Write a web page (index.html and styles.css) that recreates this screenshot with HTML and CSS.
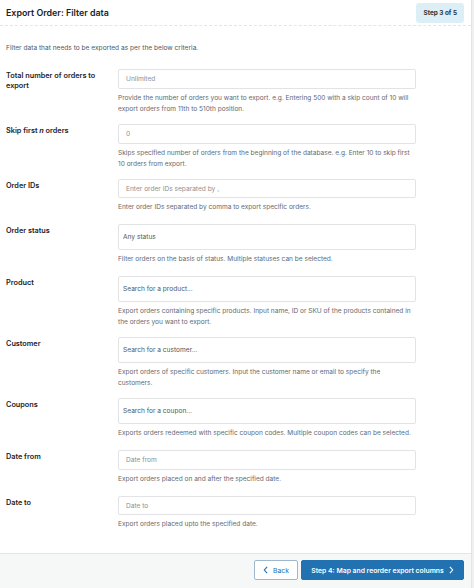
FILE: index.html
```html
<!DOCTYPE html>
<html>
<head>
<meta charset="utf-8">
<link rel="stylesheet" href="styles.css">
</head>
<body>
<div class="panel">
  <div class="header">
    <h1 class="title">Export Order: Filter data</h1>
    <span class="badge">Step 3 of 5</span>
  </div>
  <p class="intro">Filter data that needs to be exported as per the below criteria.</p>
  <div class="form">
    <div class="row">
      <div class="label">Total number of orders to export</div>
      <div class="field">
        <div class="input h20"><span class="ph">Unlimited</span></div>
        <div class="help">Provide the number of orders you want to export. e.g. Entering 500 with a skip count of 10 will<br>export orders from 11th to 510th position.</div>
      </div>
    </div>
    <div class="row">
      <div class="label">Skip first <i class="em">n</i> orders</div>
      <div class="field">
        <div class="input h20"><span class="ph">0</span></div>
        <div class="help">Skips specified number of orders from the beginning of the database. e.g. Enter 10 to skip first<br>10 orders from export.</div>
      </div>
    </div>
    <div class="row">
      <div class="label">Order IDs</div>
      <div class="field">
        <div class="input h19"><span class="ph">Enter order IDs separated by ,</span></div>
        <div class="help one">Enter order IDs separated by comma to export specific orders.</div>
      </div>
    </div>
    <div class="row">
      <div class="label">Order status</div>
      <div class="field">
        <div class="input sel"><span class="val">Any status</span></div>
        <div class="help one">Filter orders on the basis of status. Multiple statuses can be selected.</div>
      </div>
    </div>
    <div class="row">
      <div class="label">Product</div>
      <div class="field">
        <div class="input sel"><span class="val">Search for a product…</span></div>
        <div class="help">Export orders containing specific products. Input name, ID or SKU of the products contained in<br>the orders you want to export.</div>
      </div>
    </div>
    <div class="row">
      <div class="label">Customer</div>
      <div class="field">
        <div class="input sel"><span class="val">Search for a customer…</span></div>
        <div class="help">Export orders of specific customers. Input the customer name or email to specify the<br>customers.</div>
      </div>
    </div>
    <div class="row">
      <div class="label">Coupons</div>
      <div class="field">
        <div class="input sel"><span class="val">Search for a coupon…</span></div>
        <div class="help one">Exports orders redeemed with specific coupon codes. Multiple coupon codes can be selected.</div>
      </div>
    </div>
    <div class="row">
      <div class="label">Date from</div>
      <div class="field">
        <div class="input h20"><span class="ph">Date from</span></div>
        <div class="help one">Export orders placed on and after the specified date.</div>
      </div>
    </div>
    <div class="row">
      <div class="label">Date to</div>
      <div class="field">
        <div class="input h19"><span class="ph">Date to</span></div>
        <div class="help one">Export orders placed upto the specified date.</div>
      </div>
    </div>
  </div>
  <div class="footer">
    <button class="btn back"><svg class="chev" viewBox="0 0 6 10" width="5" height="8"><path d="M5 1 L1.5 5 L5 9" fill="none" stroke="currentColor" stroke-width="1.4"/></svg>Back</button>
    <button class="btn primary">Step 4: Map and reorder export columns<svg class="chev r" viewBox="0 0 6 10" width="5" height="8"><path d="M1 1 L4.5 5 L1 9" fill="none" stroke="currentColor" stroke-width="1.4"/></svg></button>
  </div>
</div>
</body>
</html>
```

FILE: styles.css
```css
html, body {
  margin: 0;
  padding: 0;
  background: #f0f0f1;
}
body {
  font-family: Inter, "Noto Sans", sans-serif;
  color: #1d2327;
}
.panel {
  width: 471px;
  background: #fff;
  border-right: 1px solid #e2e4e7;
  display: flex;
  flex-direction: column;
  min-height: 588px;
}
.header {
  height: 26px;
  box-sizing: border-box;
  display: flex;
  align-items: center;
  justify-content: space-between;
  padding: 0 7px 0 6px;
  border-bottom: 1px dashed #e4e5e7;
}
.title {
  margin: 0;
  font-size: 8.9px;
  font-weight: 600;
  color: #1d2327;
}
.badge {
  display: inline-block;
  background: #dceef6;
  border-radius: 3px;
  font-size: 6.4px;
  font-weight: 700;
  color: #2c3338;
  padding: 0 7px;
  line-height: 20px;
  height: 20px;
  margin-top: 1px;
}
.intro {
  margin: 17px 0 0 6px;
  font-size: 6.6px;
  line-height: 11px;
  color: #50575e;
}
.form {
  margin-top: 15px;
  display: flex;
  flex-direction: column;
  gap: 9px;
}
.row {
  display: grid;
  grid-template-columns: 112px 298px;
  padding-left: 6px;
}
.label {
  font-size: 7.3px;
  font-weight: 600;
  line-height: 10px;
  padding-top: 2px;
  color: #1d2327;
}
.em { font-style: italic; font-family: "Liberation Sans", sans-serif; font-weight: 700; }
.input {
  box-sizing: border-box;
  border: 1px solid #e3e3e5;
  border-radius: 2px;
  display: flex;
  align-items: center;
  padding-left: 7px;
  font-size: 6.6px;
}
.h20 { height: 20px; }
.h19 { height: 19px; }
.sel { height: 26px; padding-left: 4px; }
.ph { color: #8c8f94; }
.val { color: #50575e; }
.help {
  margin-top: 4px;
  font-size: 6.55px;
  line-height: 11px;
  color: #646970;
  white-space: nowrap;
}
.help.one { padding-bottom: 2px; }
.footer {
  margin-top: auto;
  height: 35px;
  box-sizing: border-box;
  background: #f6f7f7;
  border-top: 1px solid #e4e5e7;
  display: flex;
  justify-content: flex-end;
  align-items: flex-start;
  gap: 3px;
  padding: 6px 7px 0 0;
}
.btn {
  font-family: inherit;
  height: 20px;
  box-sizing: border-box;
  border-radius: 2px;
  font-size: 6.8px;
  display: flex;
  align-items: center;
  gap: 5px;
  cursor: pointer;
}
.back {
  background: #fff;
  border: 1px solid #9fb7cc;
  color: #2271b1;
  width: 44px;
  justify-content: center;
  padding: 0;
}
.primary {
  background: #2271b1;
  border: 1px solid #2271b1;
  color: #fff;
  font-weight: 600;
  width: 163px;
  justify-content: center;
  padding: 0;
}
.chev { display: block; }
```
